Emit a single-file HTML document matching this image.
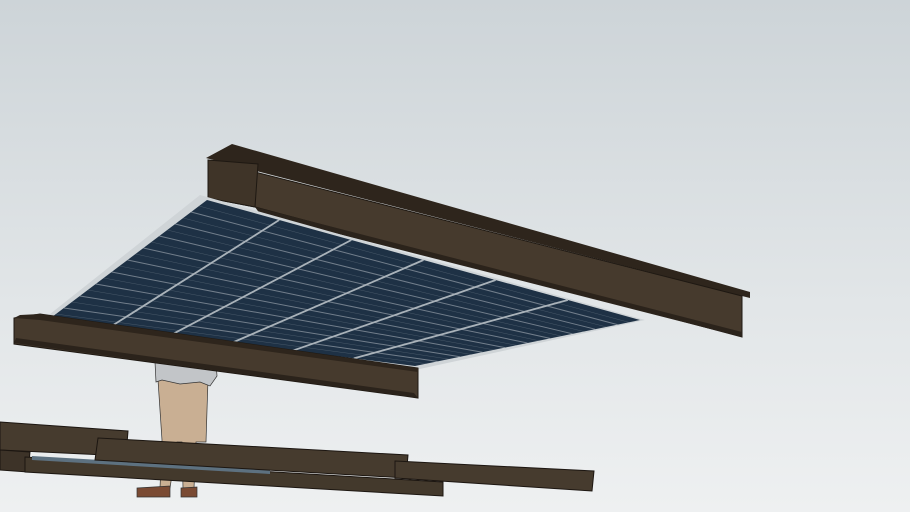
<!DOCTYPE html>
<html><head><meta charset="utf-8"><style>
html,body{margin:0;padding:0;width:910px;height:512px;overflow:hidden}
body{background:linear-gradient(#cdd4d8,#e2e6e8 60%,#eef0f1)}
svg{position:absolute;left:0;top:0}
</style></head><body>
<svg width="910" height="512" viewBox="0 0 910 512" xmlns="http://www.w3.org/2000/svg">
<g id="person" stroke="#333" stroke-width="0.7">
 <path d="M158,380 L208,380 L207,410 L206,442 L196,442 L194,488 L183,488 L182,442 L177,442 L170,488 L160,488 L162,440 Z" fill="#c9af93"/>
 <path d="M155,362 L216,362 L217,376 L210,386 L200,382 L180,384 L162,380 L156,382 Z" fill="#c2c5c8"/>
 <path d="M137,488 L170,486 L170,497 L137,497 Z" fill="#7a4a33"/>
 <path d="M181,488 L197,487 L197,497 L181,497 Z" fill="#7a4a33"/>
</g>
<g id="lower" stroke="#1c1611" stroke-width="1">
 <polygon points="0,422 128,431 126,456 0,450" fill="#463b2e"/>
 <polygon points="0,450 30,452 28,472 0,470" fill="#3d3328"/>
 <polygon points="25,457 443,482 443,496 25,472" fill="#43392c"/>
 <polygon points="32,456 270,470 270,474 32,460" fill="#5d7180" stroke="none"/>
 <polygon points="98,438 408,455 406,478 95,460" fill="#463b2e"/>
 <polygon points="395,461 594,471 592,491 395,478" fill="#463b2e"/>
</g>
<polygon points="206,158 232,144 750,292 750,298 742,296" fill="#2e251c"/>
<polygon points="208,160 742,296 742,337 255,207 208,198" fill="#463a2d" stroke="#1e1812" stroke-width="1"/>
<polygon points="208,160 258,164 255,207 208,198" fill="#3f3428" stroke="#1e1812" stroke-width="1"/>
<polygon points="255,207 742,332 742,337 260,214" fill="#2b231b"/>
<polygon points="200,195 645,320 415,370 40,322" fill="#cfd4d7"/>
<polygon points="207,200 640,320 415,366 48,320" fill="#1e3145"/>
<g id="grid" stroke="#aab3ba"></g>
<polygon points="14,318 40,314 418,368 418,398 404,396 14,344" fill="#463a2d" stroke="#1e1812" stroke-width="1"/>
<polygon points="14,343 404,396 418,398 414,393 16,338" fill="#2b231b"/>
<polygon points="14,318 20,315 40,314 418,368 418,372 40,320" fill="#2e251c"/>
</svg>
<script>
var TL=[207,200],TR=[640,320],BR=[415,366],BL=[48,320];
function P(u,v){return[TL[0]*(1-u)*(1-v)+TR[0]*u*(1-v)+BR[0]*u*v+BL[0]*(1-u)*v,TL[1]*(1-u)*(1-v)+TR[1]*u*(1-v)+BR[1]*u*v+BL[1]*(1-u)*v];}
var g=document.getElementById('grid'),s='';
for(var i=1;i<6;i++){var u=i/6,a=P(u,0),b=P(u,1);s+='<line x1="'+a[0]+'" y1="'+a[1]+'" x2="'+b[0]+'" y2="'+b[1]+'" stroke-width="1.8"/>';}
for(var j=1;j<20;j++){var v=j/20,a=P(0,v),b=P(1,v);s+='<line x1="'+a[0]+'" y1="'+a[1]+'" x2="'+b[0]+'" y2="'+b[1]+'" stroke-width="'+(j%2?0.5:1)+'" stroke-opacity="'+(j%2?0.3:0.6)+'"/>';}
g.innerHTML=s;
</script>
</body></html>
